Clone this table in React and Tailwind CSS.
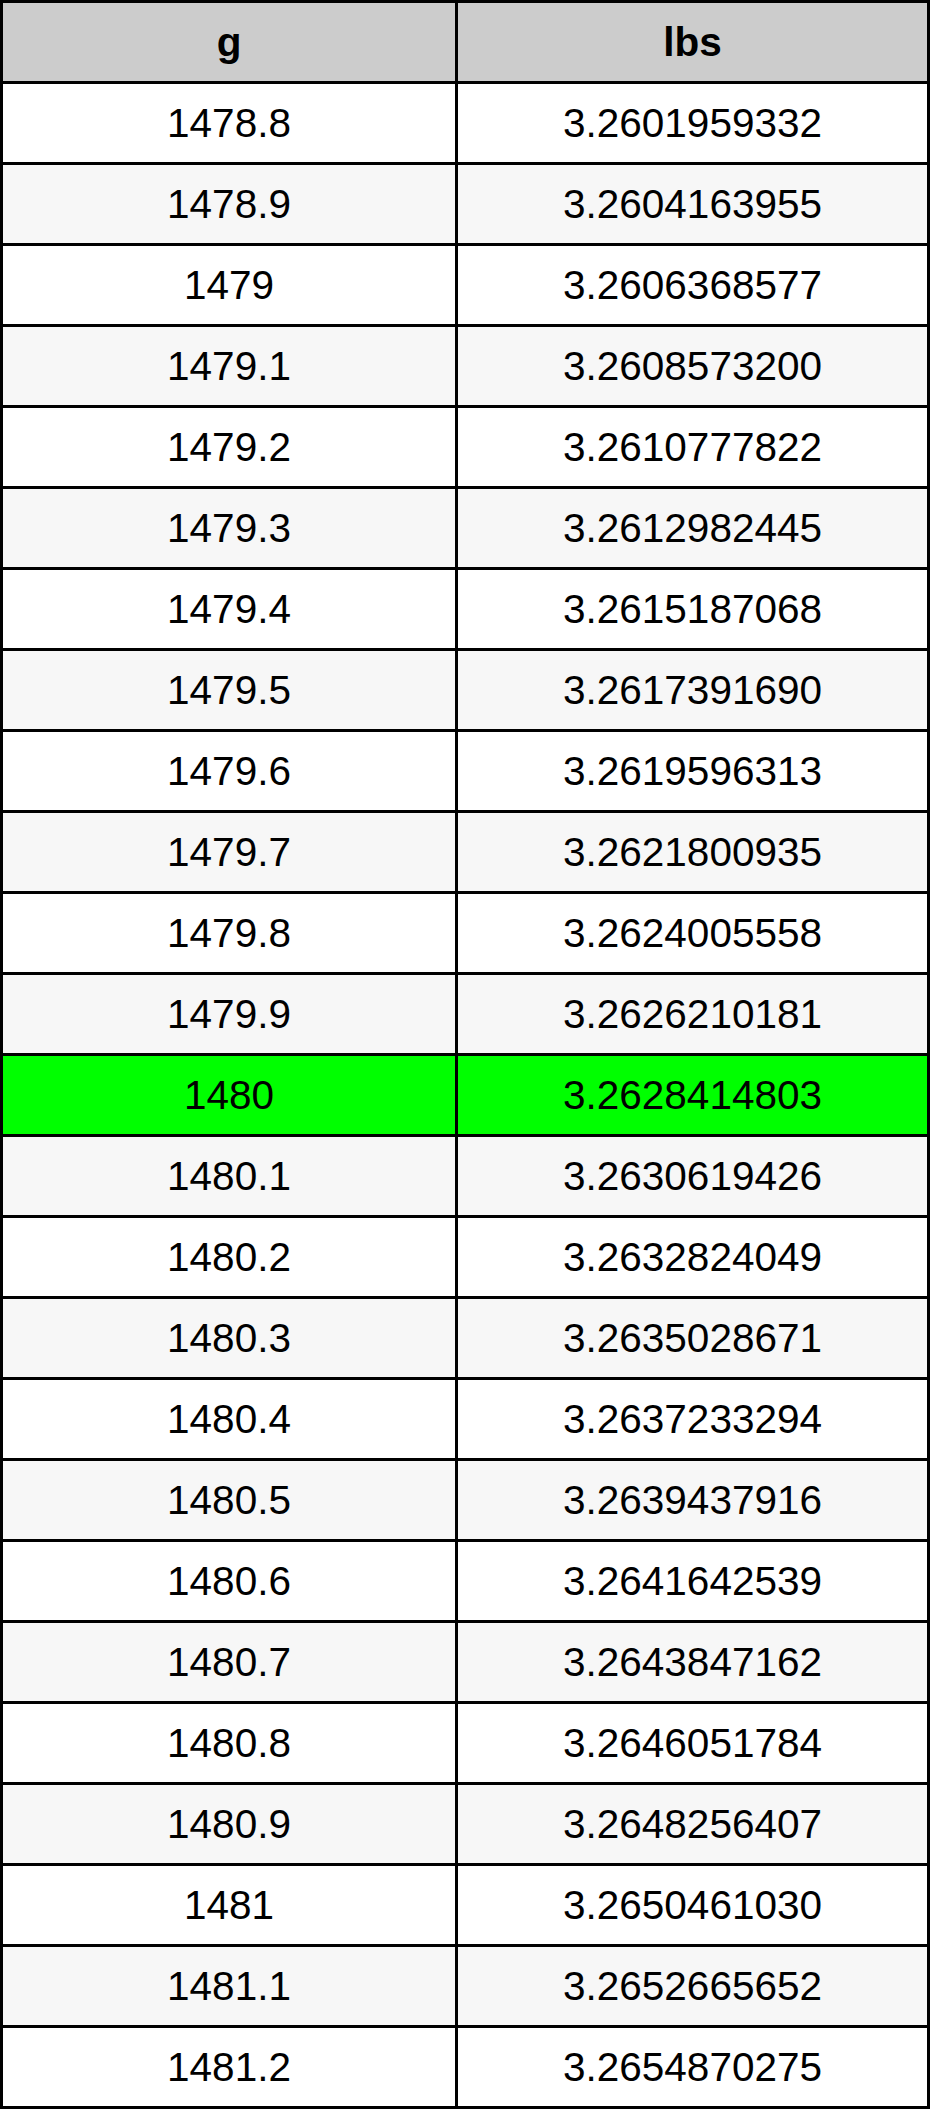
import React from "react";

const rows = [
  ["1478.8", "3.2601959332"],
  ["1478.9", "3.2604163955"],
  ["1479", "3.2606368577"],
  ["1479.1", "3.2608573200"],
  ["1479.2", "3.2610777822"],
  ["1479.3", "3.2612982445"],
  ["1479.4", "3.2615187068"],
  ["1479.5", "3.2617391690"],
  ["1479.6", "3.2619596313"],
  ["1479.7", "3.2621800935"],
  ["1479.8", "3.2624005558"],
  ["1479.9", "3.2626210181"],
  ["1480", "3.2628414803"],
  ["1480.1", "3.2630619426"],
  ["1480.2", "3.2632824049"],
  ["1480.3", "3.2635028671"],
  ["1480.4", "3.2637233294"],
  ["1480.5", "3.2639437916"],
  ["1480.6", "3.2641642539"],
  ["1480.7", "3.2643847162"],
  ["1480.8", "3.2646051784"],
  ["1480.9", "3.2648256407"],
  ["1481", "3.2650461030"],
  ["1481.1", "3.2652665652"],
  ["1481.2", "3.2654870275"],
];

export default function App() {
  return (
    <div
      className="w-[930px] bg-white text-black"
      style={{ fontFamily: '"Liberation Sans", Arial, Helvetica, sans-serif' }}
    >
      <div className="w-[930px] border-[3px] border-black">
        <div className="flex h-[78px] bg-[#cccccc] text-[40.5px] font-bold">
          <div className="w-[452px] flex items-center justify-center">g</div>
          <div className="flex-1 border-l-[3px] border-black flex items-center justify-center">lbs</div>
        </div>
        {rows.map(([g, lbs], i) => {
          const bg =
            g === "1480" ? "bg-[#00ff00]" : i % 2 === 0 ? "bg-white" : "bg-[#f7f7f7]";
          return (
            <div
              key={g}
              className={`flex h-[81px] border-t-[3px] border-black text-[40.5px] ${bg}`}
            >
              <div className="w-[452px] flex items-center justify-center">{g}</div>
              <div className="flex-1 border-l-[3px] border-black flex items-center justify-center">
                {lbs}
              </div>
            </div>
          );
        })}
      </div>
    </div>
  );
}
